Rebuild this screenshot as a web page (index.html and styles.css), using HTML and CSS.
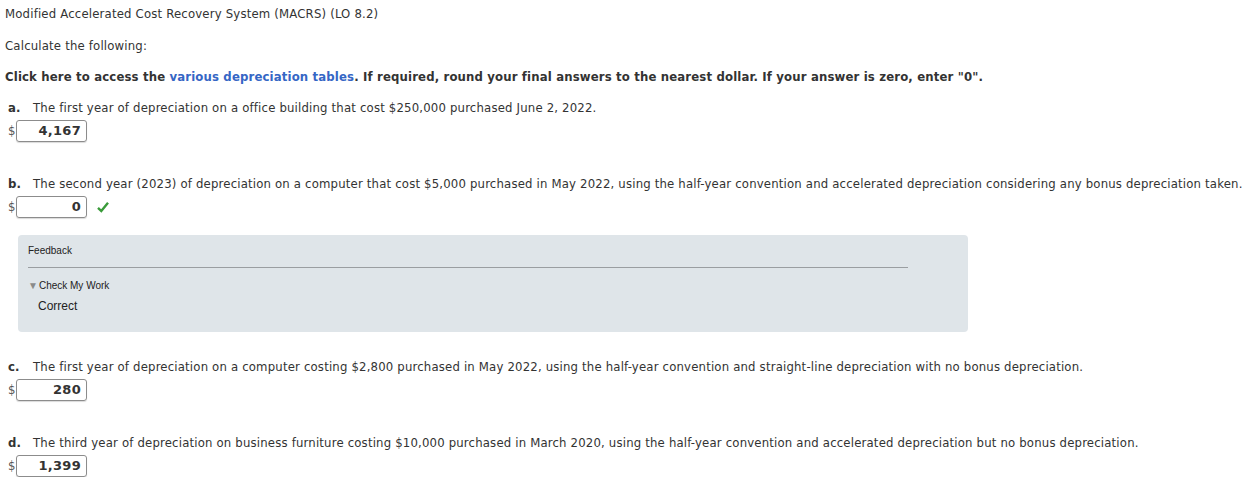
FILE: index.html
```html
<!DOCTYPE html>
<html lang="en">
  <head>
    <meta charset="UTF-8" />
    <meta name="viewport" content="width=device-width, initial-scale=1.0" />
    <title>Modified Accelerated Cost Recovery System (MACRS)</title>
    <link rel="stylesheet" href="styles.css">
  </head>
  <body>
    <p class="titulo">Modified Accelerated Cost Recovery System (MACRS) (LO 8.2)</p>
    <p class="intro">Calculate the following:</p>
    <p class="instrucao">
      Click here to access the <a href="#">various depreciation tables</a>. If required, round your final answers to the nearest dollar. If your answer is zero, enter "0".
    </p>

    <!-- Parte a -->
    <div class="parte parte-a">
      <p class="pergunta"><span class="letra">a.</span>The first year of depreciation on a office building that cost $250,000 purchased June 2, 2022.</p>
      <div class="resposta">
        <span class="cifrao">$</span>
        <span class="campo">4,167</span>
      </div>
    </div>

    <!-- Parte b -->
    <div class="parte parte-b">
      <p class="pergunta"><span class="letra">b.</span>The second year (2023) of depreciation on a computer that cost $5,000 purchased in May 2022, using the half-year convention and accelerated depreciation considering any bonus depreciation taken.</p>
      <div class="resposta">
        <span class="cifrao">$</span>
        <span class="campo">0</span>
        <svg class="certo" width="12" height="12" viewBox="0 0 12 12">
          <path d="M1 6.8 L4.3 10 L11 1.8" fill="none" stroke="#3a9b3a" stroke-width="2.4" />
        </svg>
      </div>

      <div class="feedback">
        <p class="feedback-titulo">Feedback</p>
        <hr />
        <p class="check"><span class="seta">&#9660;</span>Check My Work</p>
        <p class="correto">Correct</p>
      </div>
    </div>

    <!-- Parte c -->
    <div class="parte parte-c">
      <p class="pergunta"><span class="letra">c.</span>The first year of depreciation on a computer costing $2,800 purchased in May 2022, using the half-year convention and straight-line depreciation with no bonus depreciation.</p>
      <div class="resposta">
        <span class="cifrao">$</span>
        <span class="campo">280</span>
      </div>
    </div>

    <!-- Parte d -->
    <div class="parte parte-d">
      <p class="pergunta"><span class="letra">d.</span>The third year of depreciation on business furniture costing $10,000 purchased in March 2020, using the half-year convention and accelerated depreciation but no bonus depreciation.</p>
      <div class="resposta">
        <span class="cifrao">$</span>
        <span class="campo">1,399</span>
      </div>
    </div>
  </body>
</html>
```

FILE: styles.css
```css
body {
  font-family: "DejaVu Sans Condensed", "DejaVu Sans", sans-serif;
  font-size: 13px;
  line-height: 18px;
  letter-spacing: 0.18px;
  color: #333;
  background-color: #fff;
  margin: 0;
  padding: 5px 5px 0;
}
p {
  margin: 0;
}
.intro {
  margin-top: 14px;
}
.instrucao {
  margin-top: 13px;
  font-weight: bold;
  white-space: nowrap;
  letter-spacing: 0.15px;
}
.instrucao a {
  color: #3566c5;
  text-decoration: none;
}
.parte {
  padding-left: 3px;
}
.parte-a {
  margin-top: 13px;
}
.parte-b {
  margin-top: 33px;
}
.parte-c {
  margin-top: 26px;
}
.parte-d {
  margin-top: 33px;
}
.pergunta {
  white-space: nowrap;
}
.letra {
  display: inline-block;
  width: 25px;
  font-weight: bold;
}
.resposta {
  display: flex;
  align-items: center;
  margin-top: 3px;
}
.cifrao {
  width: 8px;
  color: #555;
  letter-spacing: 0;
}
.campo {
  box-sizing: border-box;
  width: 71px;
  height: 22px;
  border: 1px solid #8c8c8c;
  border-radius: 3px;
  box-shadow: 0 1px 1px rgba(0, 0, 0, 0.15);
  text-align: right;
  padding-right: 5px;
  font-family: "DejaVu Sans", sans-serif;
  font-weight: bold;
  font-size: 13px;
  line-height: 20px;
  letter-spacing: 0.3px;
}
.certo {
  margin-left: 10px;
}
.feedback {
  margin: 17px 0 0 10px;
  width: 950px;
  height: 97px;
  box-sizing: border-box;
  background-color: #dfe5e9;
  border-radius: 4px;
  padding: 9px 10px 0;
  font-family: "Liberation Sans", Arial, sans-serif;
  letter-spacing: 0;
  color: #222;
}
.feedback-titulo {
  font-size: 10px;
  line-height: 14px;
}
.feedback hr {
  border: none;
  border-top: 1px solid #9a9ea1;
  margin: 9px 50px 0 0;
}
.check {
  margin-top: 11px;
  font-size: 10px;
  line-height: 14px;
}
.seta {
  font-size: 10px;
  color: #8a8a8a;
  margin-right: 1px;
}
.correto {
  margin-top: 6px;
  padding-left: 10px;
  font-size: 12px;
  line-height: 14px;
}
```
